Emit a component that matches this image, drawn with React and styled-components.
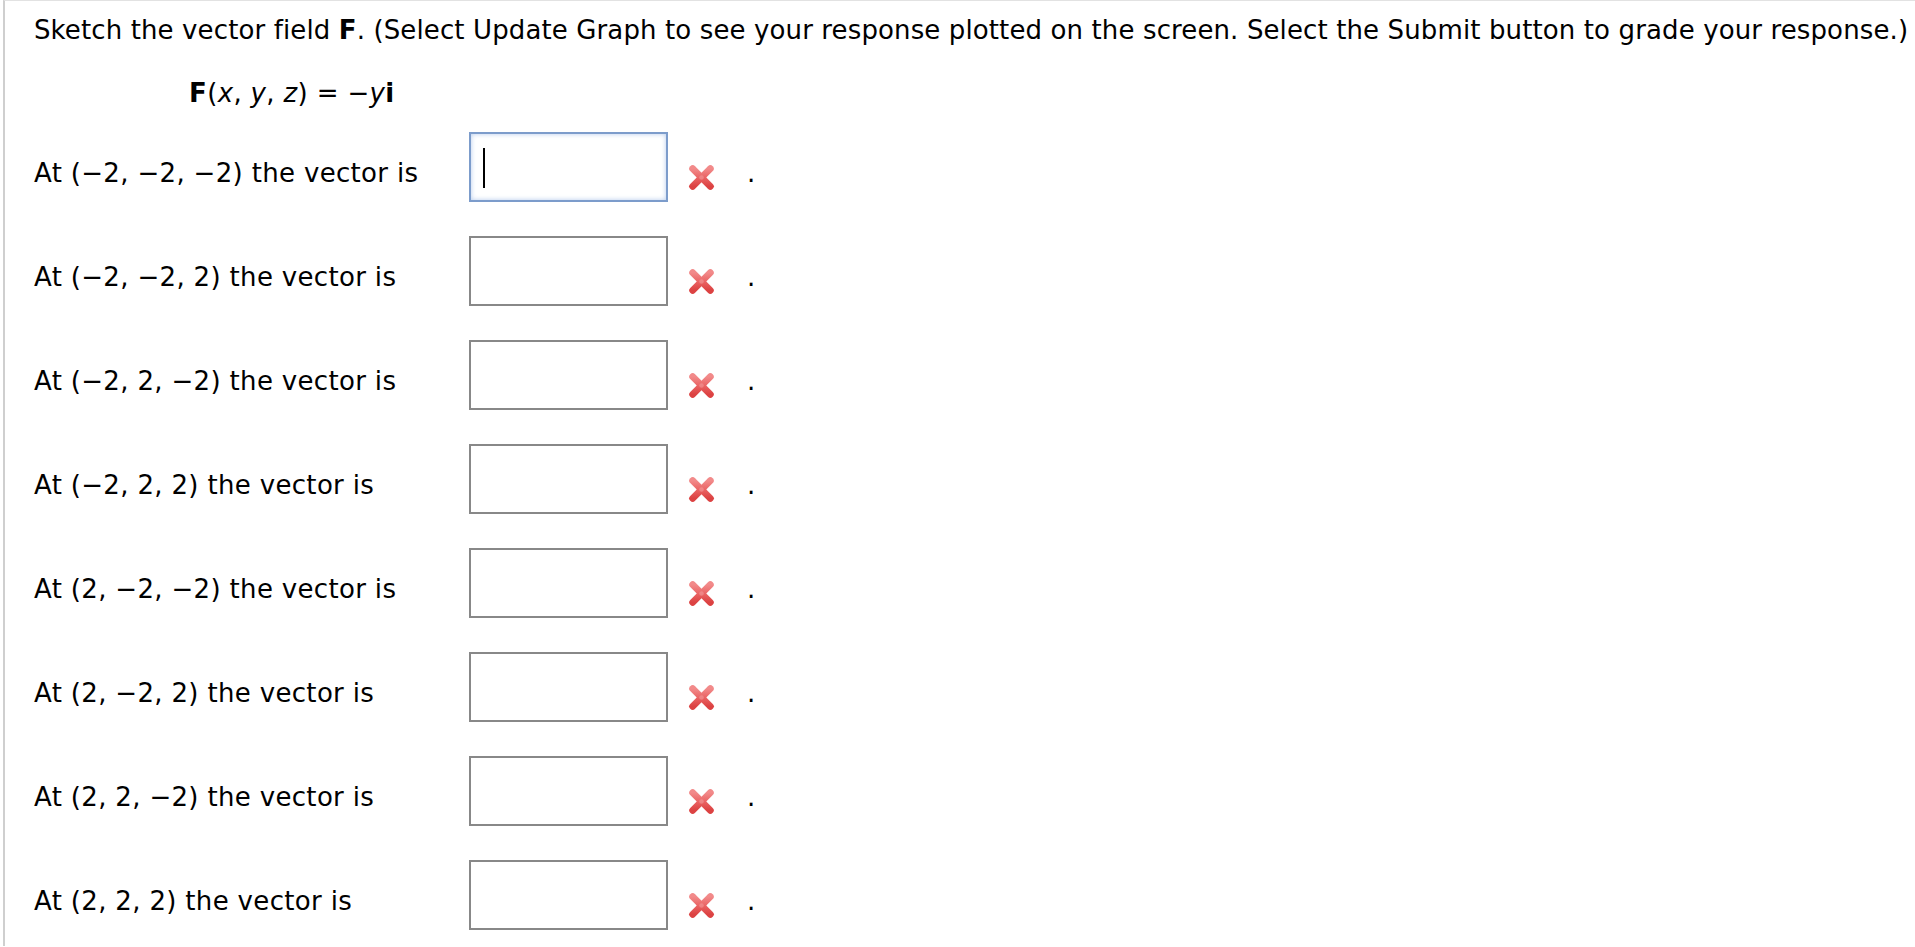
import React from "react";
import styled, { createGlobalStyle } from "styled-components";

const GlobalStyle = createGlobalStyle`
  html, body {
    margin: 0;
    padding: 0;
    background: #ffffff;
  }
  body {
    font-family: Verdana, "DejaVu Sans", sans-serif;
    color: #000000;
  }
`;

const Panel = styled.div`
  margin-left: 3px;
  min-height: 946px;
  border-top: 1px solid #e2e2e2;
  border-left: 2px solid #cfcfcf;
  padding: 11px 0 0 29px;
  font-size: 26px;
  line-height: 36px;
  box-sizing: border-box;
`;

const Prompt = styled.p`
  margin: 0;
  white-space: nowrap;
  letter-spacing: 0.12px;
`;

const Formula = styled.p`
  margin: 27px 0 0 155px;
  white-space: nowrap;
  letter-spacing: 0.35px;
`;

const Bold = styled.b`
  font-weight: bold;
`;

const Ital = styled.i`
  font-style: italic;
`;

const Rows = styled.div`
  margin-top: 21px;
  display: flex;
  flex-direction: column;
  gap: 34px;
`;

const Row = styled.div`
  display: flex;
  align-items: center;
  height: 70px;
`;

const Label = styled.span`
  width: 435px;
  flex: none;
  padding-top: 12px;
  white-space: nowrap;
  letter-spacing: 0.33px;
`;

const BoxWrap = styled.div`
  position: relative;
  width: 199px;
  height: 70px;
  flex: none;
`;

const AnswerInput = styled.input`
  box-sizing: border-box;
  width: 100%;
  height: 100%;
  margin: 0;
  padding: 0 14px;
  font-family: inherit;
  font-size: 26px;
  background: #ffffff;
  outline: none;
  border: 2px solid ${(p) => (p.$active ? "#7c9ccb" : "#888888")};
  box-shadow: ${(p) =>
    p.$active ? "inset 0 0 5px rgba(120, 160, 220, 0.55)" : "none"};
  border-radius: 0;
`;

const Caret = styled.span`
  position: absolute;
  left: 14px;
  top: 16px;
  width: 2px;
  height: 40px;
  background: #000000;
`;

const Mark = styled.svg`
  flex: none;
  width: 27px;
  height: 27px;
  margin-left: 20px;
  margin-top: 20px;
`;

const Period = styled.span`
  margin-left: 32px;
  padding-top: 12px;
`;

const points = [
  "(−2, −2, −2)",
  "(−2, −2, 2)",
  "(−2, 2, −2)",
  "(−2, 2, 2)",
  "(2, −2, −2)",
  "(2, −2, 2)",
  "(2, 2, −2)",
  "(2, 2, 2)",
];

function WrongMark({ id }) {
  return (
    <Mark viewBox="0 0 26 26" aria-hidden="true">
      <defs>
        <linearGradient id={id} x1="0" y1="0" x2="0" y2="1">
          <stop offset="0" stopColor="#f28a8a" />
          <stop offset="0.5" stopColor="#ea6464" />
          <stop offset="1" stopColor="#dc4242" />
        </linearGradient>
      </defs>
      <g stroke={`url(#${id})`} strokeWidth="6.6" strokeLinecap="round">
        <line x1="4.5" y1="4.5" x2="21.5" y2="21.5" />
        <line x1="21.5" y1="4.5" x2="4.5" y2="21.5" />
      </g>
      <circle cx="13" cy="13" r="2.2" fill="#f29a9a" opacity="0.6" />
    </Mark>
  );
}

export default function App() {
  return (
    <>
      <GlobalStyle />
      <Panel>
        <Prompt>
          Sketch the vector field <Bold>F</Bold>. (Select Update Graph to see
          your response plotted on the screen. Select the Submit button to
          grade your response.)
        </Prompt>
        <Formula>
          <Bold>F</Bold>(<Ital>x</Ital>, <Ital>y</Ital>, <Ital>z</Ital>) = −
          <Ital>y</Ital>
          <Bold>i</Bold>
        </Formula>
        <Rows>
          {points.map((pt, i) => (
            <Row key={pt}>
              <Label>At {pt} the vector is</Label>
              <BoxWrap>
                <AnswerInput type="text" readOnly $active={i === 0} />
                {i === 0 && <Caret />}
              </BoxWrap>
              <WrongMark id={`xg${i}`} />
              <Period>.</Period>
            </Row>
          ))}
        </Rows>
      </Panel>
    </>
  );
}
